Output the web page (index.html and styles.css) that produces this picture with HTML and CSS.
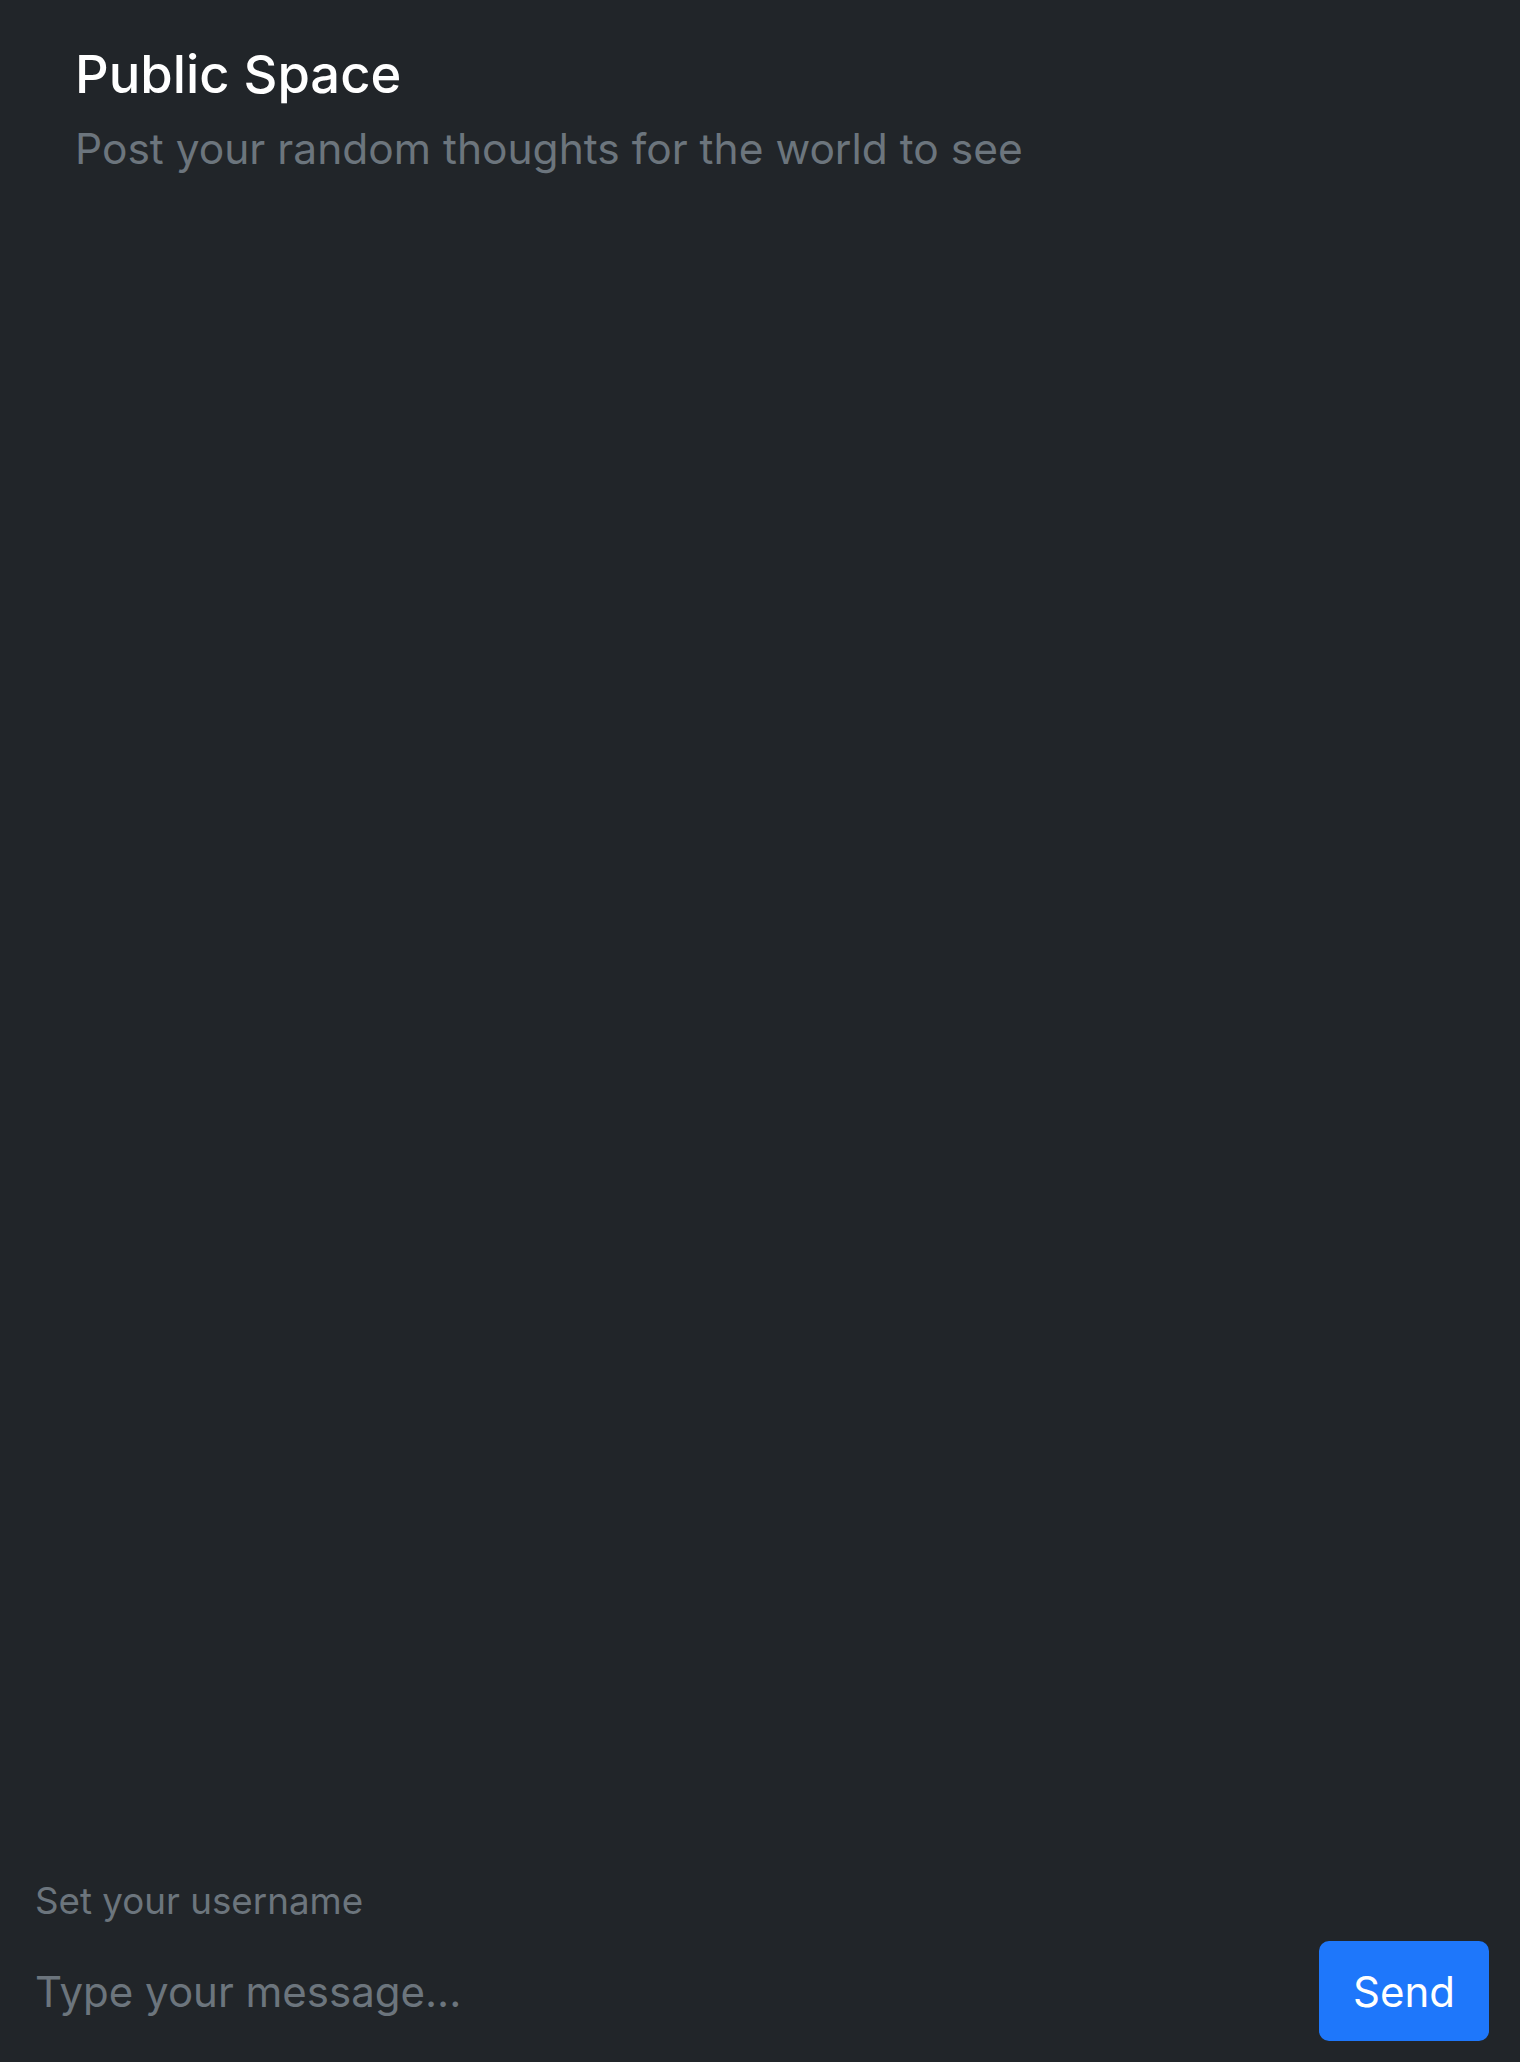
FILE: index.html
```html
<!DOCTYPE html>
<html lang="en">
<head>
<meta charset="utf-8">
<title>Public Space</title>
<link rel="stylesheet" href="styles.css">
</head>
<body>
<div class="app">
  <header class="header">
    <h5 class="title">Public Space</h5>
    <p class="subtitle">Post your random thoughts for the world to see</p>
  </header>
  <main class="messages"></main>
  <form class="composer" onsubmit="return false;">
    <div class="username">Set your username</div>
    <div class="row">
      <input class="message-input" type="text" placeholder="Type your message...">
      <button class="send-btn" type="submit">Send</button>
    </div>
  </form>
</div>
</body>
</html>
```

FILE: styles.css
```css
html, body {
  margin: 0;
  padding: 0;
  height: 100%;
  background: #212529;
}

body {
  font-family: Inter, "Noto Sans", "Liberation Sans", sans-serif;
  color: #dee2e6;
}

.app {
  display: flex;
  flex-direction: column;
  height: 100vh;
}

.header {
  padding: 43px 73px 0 75px;
}

.title {
  margin: 0 0 10.5px 0;
  font-size: 52.5px;
  line-height: 1.2;
  font-weight: 500;
  color: #ffffff;
}

.subtitle {
  margin: 0;
  font-size: 42.5px;
  line-height: 1.5;
  color: #6c757d;
}

.messages {
  flex: 1;
}

.composer {
  padding: 0 31px 21px 35px;
  display: flex;
  flex-direction: column;
  gap: 13px;
}

.username {
  font-size: 36.75px;
  line-height: 1.5;
  color: #6c757d;
}

.row {
  display: flex;
  align-items: center;
  gap: 24px;
}

.message-input {
  flex: 1;
  min-width: 0;
  background: transparent;
  border: none;
  outline: none;
  padding: 0;
  font-family: inherit;
  font-size: 42px;
  line-height: 63px;
  height: 63px;
  color: #dee2e6;
}

.message-input::placeholder {
  color: #6c757d;
  opacity: 1;
}

.send-btn {
  background: #1e77fb;
  border: none;
  border-radius: 10px;
  color: #ffffff;
  font-family: inherit;
  font-size: 42px;
  line-height: 63px;
  padding: 18.5px 34px;
  cursor: pointer;
}
```
